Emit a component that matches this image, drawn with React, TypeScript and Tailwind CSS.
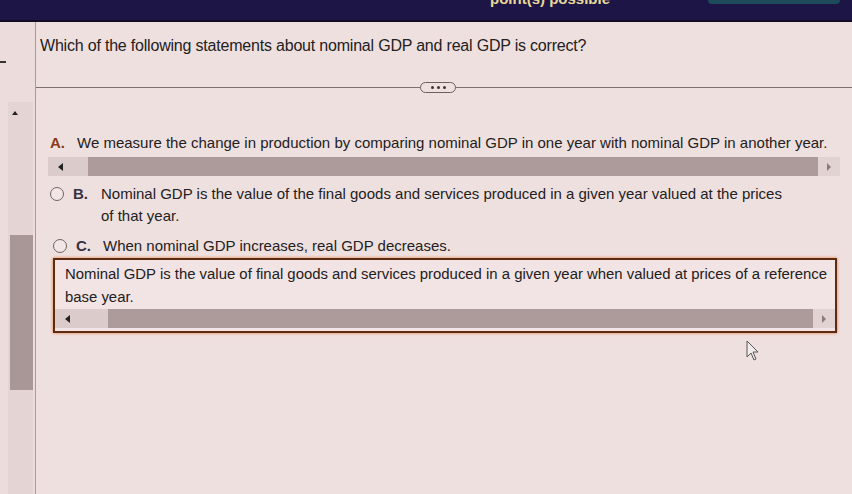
import React from 'react';

function HScroll({ width, leftW }: { width: number; leftW: number }) {
  return (
    <div className="flex h-[19px] items-stretch" style={{ width }}>
      <div className="flex items-center bg-[#dccbcb] pl-[10px]" style={{ width: leftW }}>
        <span className="block h-0 w-0 border-y-[4px] border-r-[5px] border-y-transparent border-r-[#222]" />
      </div>
      <div className="flex-1 bg-[#ad9b9b]" />
      <div className="flex w-[22px] items-center justify-center bg-[#e2d3d3]">
        <span className="block h-0 w-0 border-y-[4px] border-l-[4px] border-y-transparent border-l-[#8a7a7a]" />
      </div>
    </div>
  );
}

function Radio() {
  return <span className="inline-block h-[14px] w-[14px] rounded-full border-[1.5px] border-[#6e6464] bg-[#f3e6e6]" />;
}

export default function App() {
  return (
    <div
      className="relative flex h-[494px] w-[852px] flex-col overflow-hidden bg-[#efe0e0] text-[#232020]"
      style={{ fontFamily: '"Liberation Sans", Arial, sans-serif' }}
    >
      {/* top bar */}
      <div className="relative h-[22px] shrink-0 overflow-hidden border-b-2 border-[#120d24] bg-[#1d1545]">
        <div className="absolute left-[490px] top-[-10px] text-[15px] font-bold leading-[18px] text-[#e8d89a]">point(s) possible</div>
        <div className="absolute left-[708px] top-0 h-[4px] w-[132px] rounded-b-md bg-[#1e4b5c]" />
      </div>

      <div className="flex flex-1">
        {/* left rail */}
        <div className="relative w-[36px] shrink-0 border-r border-[#a99a9a] bg-[#ecdcdc]">
          <div className="absolute left-0 top-[39px] h-[2px] w-[6px] bg-[#333]" />
          <div className="absolute left-[8px] top-[80px] bottom-0 w-[25px] bg-[#e4d4d4]">
            <span className="absolute left-[4px] top-[9px] block h-0 w-0 border-x-[3px] border-b-[4px] border-x-transparent border-b-[#222]" />
            <div className="absolute left-[2px] top-[133px] h-[155px] w-[23px] bg-[#a99797]" />
          </div>
        </div>

        {/* main */}
        <div className="flex flex-1 flex-col">
          <div className="pl-[4px] pt-[15px] text-[16px] leading-[18px] tracking-[-0.2px]">
            Which of the following statements about nominal GDP and real GDP is correct?
          </div>

          <div className="relative mt-[32px] h-[1px] bg-[#7d7272]">
            <div className="absolute left-[384px] top-[-5px] flex h-[11px] w-[36px] items-center justify-center gap-[3px] rounded-full border border-[#6a6060] bg-[#efe0e0]">
              <span className="h-[3px] w-[3px] rounded-full bg-[#3a3434]" />
              <span className="h-[3px] w-[3px] rounded-full bg-[#3a3434]" />
              <span className="h-[3px] w-[3px] rounded-full bg-[#3a3434]" />
            </div>
          </div>

          <div className="mt-[46px] flex items-center pl-[14px] text-[15px] leading-[18px]">
            <span className="w-[27px] font-bold text-[#8a3c14]">A.</span>
            <span>We measure the change in production by comparing nominal GDP in one year with nominal GDP in another year.</span>
          </div>
          <div className="mt-[5px] pl-[12px]">
            <HScroll width={792} leftW={40} />
          </div>

          <div className="mt-[7px] flex items-start pl-[14px] text-[15px] leading-[22px]">
            <span className="mr-[9px] mt-[4px] flex w-[14px]"><Radio /></span>
            <span className="w-[28px] font-bold text-[#383040]">B.</span>
            <span className="w-[690px]">
              Nominal GDP is the value of the final goods and services produced in a given year valued at the prices of that year.
            </span>
          </div>

          <div className="mt-[8px] flex items-center pl-[17px] text-[15px] leading-[22px]">
            <span className="mr-[9px] flex w-[14px]"><Radio /></span>
            <span className="w-[27px] font-bold text-[#383040]">C.</span>
            <span>When nominal GDP increases, real GDP decreases.</span>
          </div>

          <div className="ml-[17px] mt-[1px] w-[784px] border-2 border-[#5e2a12] bg-[#f2e4e4] shadow-[0_0_3px_#e07a3a]">
            <div className="pl-[10px] pr-[2px] pt-[3px] text-[14.9px] leading-[23px]">
              Nominal GDP is the value of final goods and services produced in a given year when valued at prices of a reference base year.
            </div>
            <div className="pb-[3px]">
              <HScroll width={780} leftW={53} />
            </div>
          </div>
        </div>
      </div>

      {/* mouse cursor */}
      <svg className="absolute left-[746px] top-[340px]" width="14" height="22" viewBox="0 0 14 22">
        <path d="M1 1 L1 17 L5 13 L8 20 L10 19 L7 12 L12 12 Z" fill="#f4ecec" stroke="#555" strokeWidth="1" />
      </svg>
    </div>
  );
}
